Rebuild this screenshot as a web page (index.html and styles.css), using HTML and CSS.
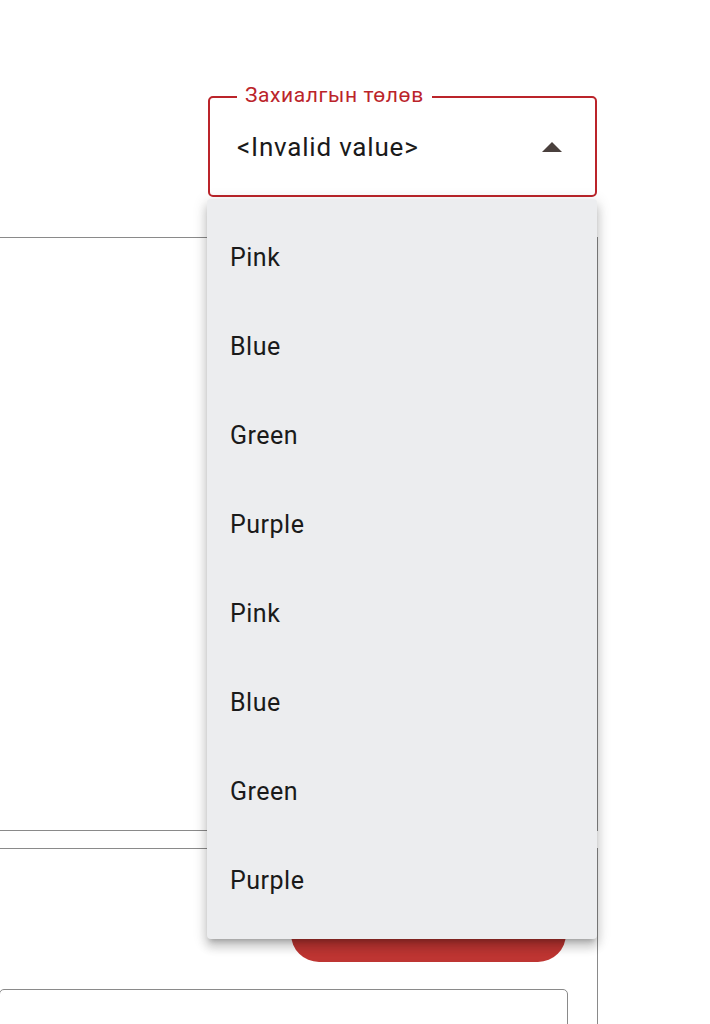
FILE: index.html
```html
<!DOCTYPE html>
<html>
<head>
  <link rel="stylesheet" href="styles.css">
</head>
<body>
  <div class="page">
    <div class="status-field">
      <span class="status-label">Захиалгын төлөв</span>
      <div class="status-value">
        <span>&lt;Invalid value&gt;</span>
        <span class="arrow"></span>
      </div>

      <ul class="status-menu">
        <li>Pink</li>
        <li>Blue</li>
        <li>Green</li>
        <li>Purple</li>
        <li>Pink</li>
        <li>Blue</li>
        <li>Green</li>
        <li>Purple</li>
      </ul>
    </div>

    <div class="card card-top"></div>

    <div class="card card-bottom">
      <div class="actions">
        <button class="save-btn"></button>
      </div>
      <div class="inner-box"></div>
    </div>
  </div>
</body>
</html>
```

FILE: styles.css
```css
body {
  margin: 0;
  font-family: Roboto, "Noto Sans", sans-serif;
  background: #fff;
  color: #1a1a1a;
}

.page {
  height: 1024px;
  padding-top: 96px;
  box-sizing: border-box;
  overflow: hidden;
}

.status-field {
  position: relative;
  margin-left: 208px;
  width: 385px;
  height: 97px;
  border: 2px solid #bb242a;
  border-radius: 5px;
}

/* label sits on top of the border, like a legend */
.status-label {
  position: absolute;
  top: -15px;
  left: 27px;
  padding: 0 8px;
  background: #fff;
  color: #bb242a;
  font-size: 21px;
  letter-spacing: 0.6px;
  line-height: 24px;
}

.status-value {
  display: flex;
  align-items: center;
  justify-content: space-between;
  height: 100%;
  padding: 0 33px 0 27px;
  font-size: 26px;
  letter-spacing: 0.8px;
}

.arrow {
  width: 0;
  height: 0;
  border-left: 10px solid transparent;
  border-right: 10px solid transparent;
  border-bottom: 10px solid #4a403d;
}

.status-menu {
  position: absolute;
  top: 101px;
  left: -3px;
  width: 390px;
  margin: 0;
  padding: 14px 0;
  list-style: none;
  background: #ecedef;
  border-radius: 4px;
  box-shadow: 0 5px 5px -3px rgba(0,0,0,0.2),
              0 8px 10px 1px rgba(0,0,0,0.14),
              0 3px 14px 2px rgba(0,0,0,0.12);
  z-index: 10;
}

.status-menu li {
  height: 89px;
  line-height: 89px;
  padding-left: 23px;
  font-size: 25px;
  letter-spacing: 0.5px;
}

.card {
  margin-left: -1px;
  width: 597px;
  border: 1px solid #8a8a8a;
}

.card-top {
  margin-top: 40px;
  height: 592px;
}

.card-bottom {
  margin-top: 17px;
  height: 300px;
}

.actions {
  display: flex;
  justify-content: flex-end;
  padding: 57px 31px 0 0;
}

.save-btn {
  width: 275px;
  height: 56px;
  border: none;
  border-radius: 28px;
  background: linear-gradient(#a82a28, #be3532 40%);
}

.inner-box {
  margin-top: 27px;
  margin-left: -1px;
  width: 567px;
  height: 100px;
  border: 1px solid #8a8a8a;
  border-radius: 5px;
}
```
